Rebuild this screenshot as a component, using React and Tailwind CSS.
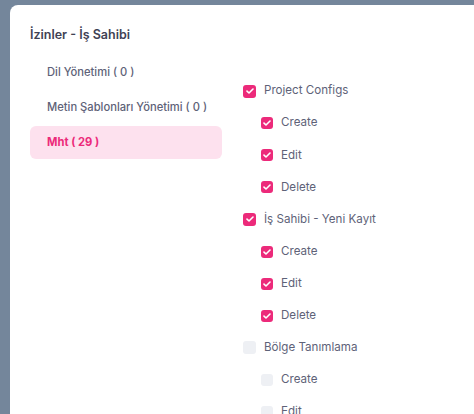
import React from "react";

function Box({ checked, small }) {
  const size = small ? "w-[12px] h-[12px]" : "w-[13px] h-[13px]";
  return (
    <span
      className={`${size} shrink-0 rounded-[3px] flex items-center justify-center ${
        checked ? "bg-[#ec2a7a]" : "bg-[#eef0f4]"
      }`}
    >
      {checked && (
        <svg width="8" height="6" viewBox="0 0 8 6" fill="none">
          <path d="M1 3.1 L3 5 L7 1" stroke="white" strokeWidth="1.6" strokeLinecap="round" strokeLinejoin="round" />
        </svg>
      )}
    </span>
  );
}

function Row({ label, checked, child }) {
  return (
    <div className={`h-[32.1px] flex items-center ${child ? "pl-[18px] gap-[8px]" : "gap-[8px]"}`}>
      <Box checked={checked} small={child} />
      <span className="text-[11.6px] text-[#5e6278]">{label}</span>
    </div>
  );
}

export default function App() {
  const rows = [
    ["Project Configs", true, false],
    ["Create", true, true],
    ["Edit", true, true],
    ["Delete", true, true],
    ["İş Sahibi - Yeni Kayıt", true, false],
    ["Create", true, true],
    ["Edit", true, true],
    ["Delete", true, true],
    ["Bölge Tanımlama", false, false],
    ["Create", false, true],
    ["Edit", false, true],
  ];
  return (
    <div
      className="w-[474px] h-[414px] overflow-hidden bg-[#74869b] pt-[5px] pl-[10px]"
      style={{ fontFamily: "Inter, 'Noto Sans', sans-serif" }}
    >
      <div className="w-[480px] h-[420px] bg-white rounded-tl-[8px] pl-[20px] pt-[20px]">
        <div className="h-5 flex items-center text-[12.5px] font-semibold text-[#3f4254]">
          İzinler - İş Sahibi
        </div>
        <div className="flex mt-[11px]">
          <div className="w-[192px] flex flex-col gap-[2px] text-[11.2px] font-medium">
            <div className="h-[33px] flex items-center pl-[17px] text-[#5e6278]">Dil Yönetimi ( 0 )</div>
            <div className="h-[33px] flex items-center pl-[17px] text-[#5e6278]">Metin Şablonları Yönetimi ( 0 )</div>
            <div className="h-[33px] flex items-center pl-[17px] rounded-[6px] bg-[#fde1ee] text-[#ec2a7a] font-bold">
              Mht ( 29 )
            </div>
          </div>
          <div className="ml-[21px] mt-[19px] flex flex-col">
            {rows.map(([l, c, ch], i) => (
              <Row key={i} label={l} checked={c} child={ch} />
            ))}
          </div>
        </div>
      </div>
    </div>
  );
}
